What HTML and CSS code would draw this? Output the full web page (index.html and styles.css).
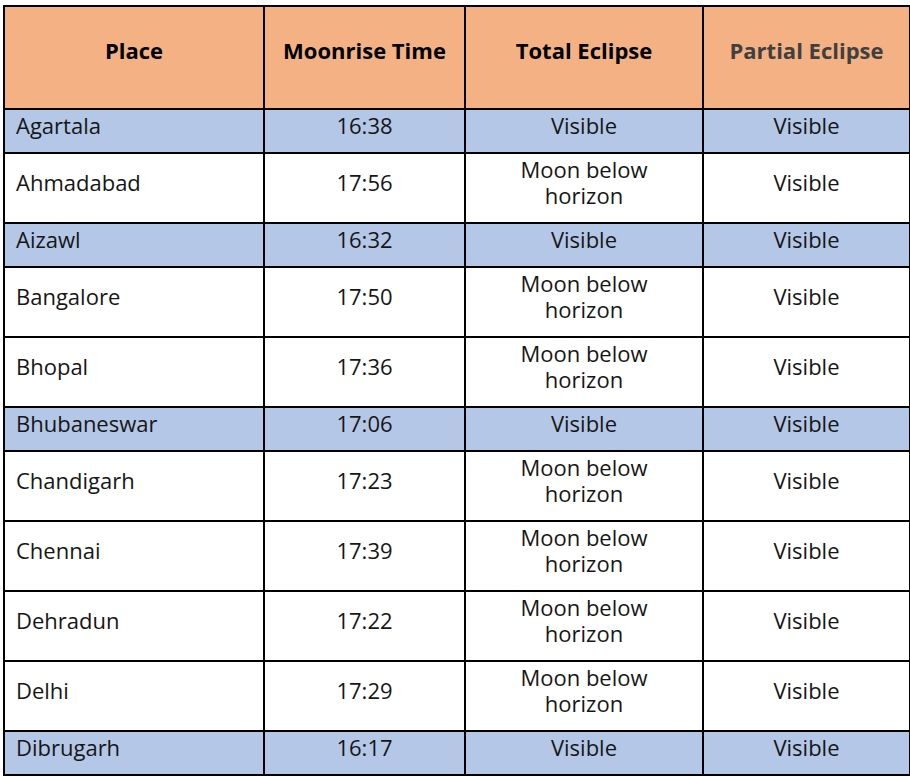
FILE: index.html
```html
<!DOCTYPE html>
<html>
<head>
<meta charset="utf-8">
<link rel="stylesheet" href="styles.css">
</head>
<body>
<table class="eclipse">
  <colgroup>
    <col class="c1"><col class="c2"><col class="c3"><col class="c4">
  </colgroup>
  <thead>
    <tr class="head">
      <th>Place</th>
      <th>Moonrise Time</th>
      <th>Total Eclipse</th>
      <th class="muted">Partial Eclipse</th>
    </tr>
  </thead>
  <tbody>
    <tr class="blue"><td class="place">Agartala</td><td>16:38</td><td>Visible</td><td>Visible</td></tr>
    <tr><td class="place">Ahmadabad</td><td>17:56</td><td>Moon below<br>horizon</td><td>Visible</td></tr>
    <tr class="blue"><td class="place">Aizawl</td><td>16:32</td><td>Visible</td><td>Visible</td></tr>
    <tr><td class="place">Bangalore</td><td>17:50</td><td>Moon below<br>horizon</td><td>Visible</td></tr>
    <tr><td class="place">Bhopal</td><td>17:36</td><td>Moon below<br>horizon</td><td>Visible</td></tr>
    <tr class="blue"><td class="place">Bhubaneswar</td><td>17:06</td><td>Visible</td><td>Visible</td></tr>
    <tr><td class="place">Chandigarh</td><td>17:23</td><td>Moon below<br>horizon</td><td>Visible</td></tr>
    <tr><td class="place">Chennai</td><td>17:39</td><td>Moon below<br>horizon</td><td>Visible</td></tr>
    <tr><td class="place">Dehradun</td><td>17:22</td><td>Moon below<br>horizon</td><td>Visible</td></tr>
    <tr><td class="place">Delhi</td><td>17:29</td><td>Moon below<br>horizon</td><td>Visible</td></tr>
    <tr class="blue"><td class="place">Dibrugarh</td><td>16:17</td><td>Visible</td><td>Visible</td></tr>
  </tbody>
</table>
</body>
</html>
```
FILE: styles.css
```css
html, body {
  margin: 0;
  padding: 0;
  background: #ffffff;
}
body {
  padding: 5px 0 0 3px;
  font-family: "Open Sans", "Noto Sans", sans-serif;
  color: #161616;
}
.eclipse {
  border-collapse: collapse;
  width: 906px;
  table-layout: fixed;
}
.c1 { width: 260px; }
.c2 { width: 201px; }
.c3 { width: 238px; }
.c4 { width: 207px; }
.eclipse th,
.eclipse td {
  border: 2px solid #000;
  padding: 2px 8px 14px;
  font-size: 22px;
  line-height: 26px;
  text-align: center;
  vertical-align: middle;
}
.eclipse th {
  height: 86px;
  padding-top: 0;
  padding-bottom: 15px;
  background: #f4b183;
  font-weight: 700;
  color: #000;
  font-size: 22px;
}
.eclipse th.muted {
  color: #404040;
}
.eclipse td.place {
  text-align: left;
  padding-left: 11px;
}
.eclipse tr.blue td {
  background: #b4c7e7;
}
```
